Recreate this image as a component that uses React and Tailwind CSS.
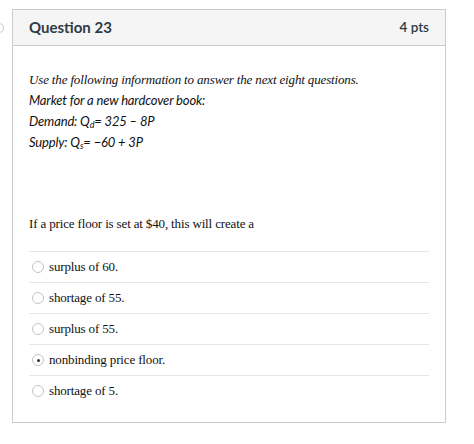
const OPTIONS = [
  { label: "surplus of 60.", checked: false },
  { label: "shortage of 55.", checked: false },
  { label: "surplus of 55.", checked: false },
  { label: "nonbinding price floor.", checked: true },
  { label: "shortage of 5.", checked: false },
];

function Radio({ checked }) {
  return (
    <span className="w-[12px] h-[12px] rounded-full border border-[#c4c4c4] bg-white flex items-center justify-center shrink-0">
      {checked && <span className="w-[3px] h-[3px] rounded-full bg-[#333]" />}
    </span>
  );
}

export default function App() {
  return (
    <div className="w-[474px] h-[444px] bg-white relative overflow-hidden">
      {/* flag marker peeking from the left */}
      <span className="absolute left-[-6px] top-[23px] w-[10px] h-[10px] rounded-full border border-[#c8c8c8]" />

      <div className="ml-[12px] mt-[9px] w-[434px] border border-[#c7cdd1] bg-white">
        <div className="h-[36px] bg-[#f5f5f5] border-b border-[#c7cdd1] flex items-center justify-between pl-[16px] pr-[16px] font-['Lato','Noto_Sans',sans-serif] text-[#2d3b45]">
          <span className="text-[15px] font-bold">Question 23</span>
          <span className="text-[13.5px] font-semibold">4 pts</span>
        </div>

        <div className="px-[16px] pt-[23px] pb-[16px]">
          <div className="text-[13px] leading-[21px] text-[#111]">
            <p className="italic font-['Liberation_Serif',serif] tracking-[-0.15px]">
              Use the following information to answer the next eight questions.
            </p>
            <p className="italic font-['Lato',sans-serif] tracking-[-0.15px]">
              Market for a new hardcover book:
            </p>
            <p className="italic font-['Lato',sans-serif] tracking-[-0.15px]">
              Demand: Q<sub className="text-[9px]">d</sub>= 325 – 8P
            </p>
            <p className="italic font-['Lato',sans-serif] tracking-[-0.15px]">
              Supply: Q<sub className="text-[9px]">s</sub>= −60 + 3P
            </p>
          </div>

          <p className="mt-[60px] mb-[17px] text-[13px] leading-[21px] text-[#111] font-['Liberation_Serif',serif] tracking-[-0.15px]">
            If a price floor is set at $40, this will create a
          </p>

          <div>
            {OPTIONS.map((o) => (
              <div
                key={o.label}
                className="h-[31px] border-t border-[#e6e6e6] flex items-center gap-[5px] pl-[3px] font-['Liberation_Serif',serif] text-[13px] text-[#111] tracking-[-0.15px]"
              >
                <Radio checked={o.checked} />
                <span>{o.label}</span>
              </div>
            ))}
          </div>
        </div>
      </div>
    </div>
  );
}
